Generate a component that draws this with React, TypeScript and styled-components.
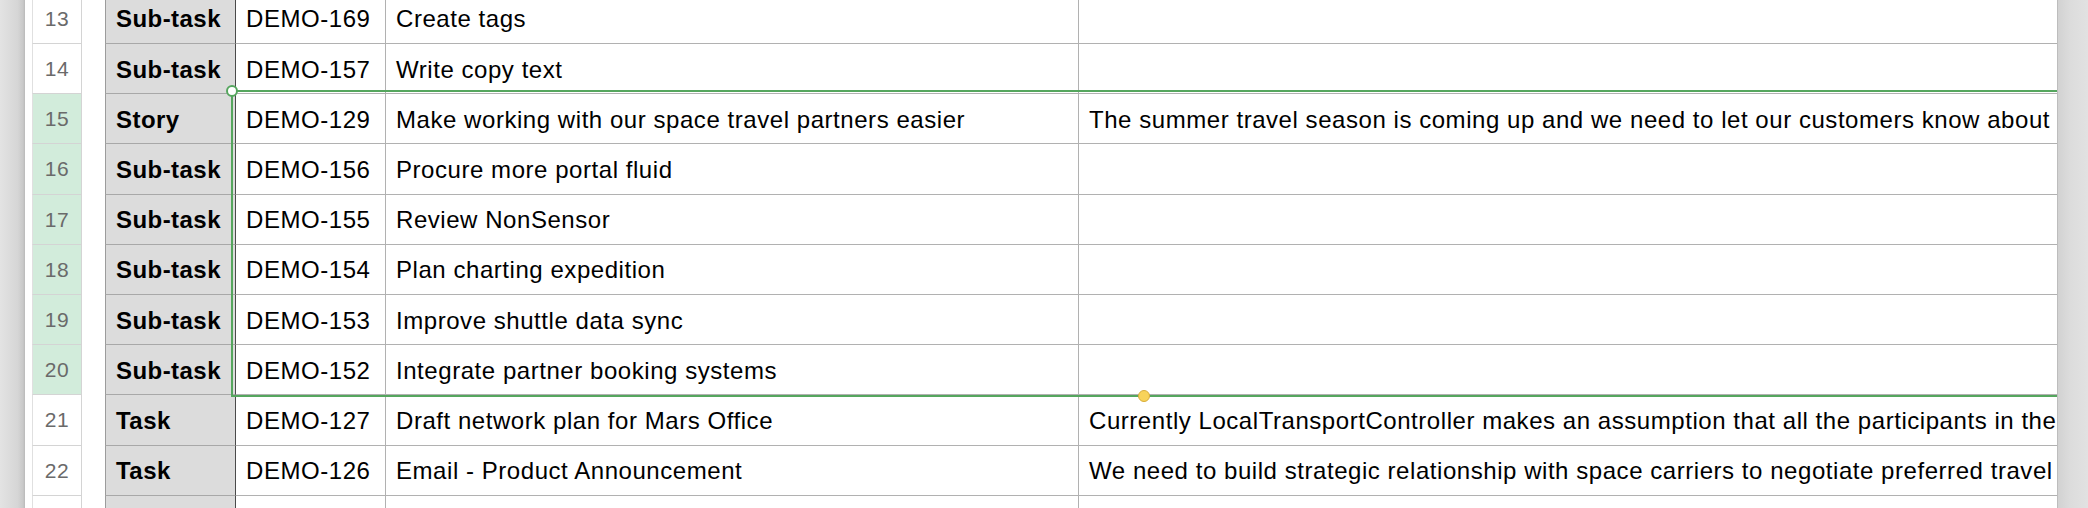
import React from "react";
import styled, { createGlobalStyle } from "styled-components";

const Global = createGlobalStyle`
  html, body { margin: 0; padding: 0; background: #ffffff; overflow: hidden; }
  body { font-family: "Liberation Sans", Arial, Helvetica, sans-serif; }
`;

const ROW_H = 50.2;

const Page = styled.div`
  display: flex;
  width: 2088px;
  height: 508px;
  overflow: hidden;
  background: #fff;
`;

const LeftShade = styled.div`
  width: 25px;
  flex: none;
  background: linear-gradient(to right, #e3e3e3 0%, #d6d6d6 70%, #c9c9c9 92%, #b9b9b9 100%);
`;

const RightShade = styled.div`
  width: 30px;
  flex: none;
  border-left: 1px solid #bdbdbd;
  background: linear-gradient(to right, #d2d2d2 0%, #dcdcdc 40%, #e2e2e2 100%);
`;

const Sheet = styled.div`
  position: relative;
  flex: 1;
  min-width: 0;
  overflow: hidden;
`;

const Rows = styled.div`
  position: relative;
  margin-top: -6.2px;
`;

const Row = styled.div`
  display: grid;
  grid-template-columns: 7px 50px 23px 131px 150px 693px 1fr;
  height: ${ROW_H}px;
`;

const Blank = styled.div``;

const NumCell = styled.div<{ $active?: boolean }>`
  box-sizing: border-box;
  border-left: 1px solid #e0e0e0;
  border-right: 1px solid #d4d4d4;
  border-bottom: 1px solid #d4d4d4;
  background: ${(p) => (p.$active ? "#d2ecdb" : "#ffffff")};
  color: #6a6a6a;
  font-size: 21px;
  letter-spacing: 0.6px;
  padding-top: 1px;
  display: flex;
  align-items: center;
  justify-content: center;
`;

const Cell = styled.div`
  box-sizing: border-box;
  border-bottom: 1px solid #b1b1b1;
  border-right: 1px solid #b1b1b1;
  display: flex;
  align-items: center;
  padding-left: 10px;
  padding-top: 2px;
  font-size: 24px;
  letter-spacing: 0.55px;
  color: #000;
  white-space: nowrap;
  overflow: hidden;
`;

const TypeCell = styled(Cell)`
  background: #dcdcdc;
  border-left: 1px solid #9c9c9c;
  border-right: 1px solid #4a4a4a;
  border-bottom-color: #a8a8a8;
  font-weight: 700;
  letter-spacing: 0.45px;
`;

const DescCell = styled(Cell)`
  border-right: none;
`;

const Selection = styled.div`
  position: absolute;
  left: 206px;
  right: -4px;
  top: ${2 * ROW_H - 4}px;
  height: ${6 * ROW_H + 6}px;
  box-sizing: border-box;
  border: 2px solid #55a65e;
  pointer-events: none;
`;

const Handle = styled.div<{ $tone: "start" | "end" }>`
  position: absolute;
  width: 12px;
  height: 12px;
  box-sizing: border-box;
  border-radius: 50%;
  ${(p) =>
    p.$tone === "start"
      ? `left: -7px; top: -7px; background: #fff; border: 2px solid #55a65e;`
      : `left: 905px; bottom: -7px; background: #f8d35a; border: 1px solid #d8ad3a;`}
`;

type RowData = {
  n: number;
  type: string;
  id: string;
  summary: string;
  desc: string;
};

const rows: RowData[] = [
  { n: 13, type: "Sub-task", id: "DEMO-169", summary: "Create tags", desc: "" },
  { n: 14, type: "Sub-task", id: "DEMO-157", summary: "Write copy text", desc: "" },
  {
    n: 15,
    type: "Story",
    id: "DEMO-129",
    summary: "Make working with our space travel partners easier",
    desc: "The summer travel season is coming up and we need to let our customers know about",
  },
  { n: 16, type: "Sub-task", id: "DEMO-156", summary: "Procure more portal fluid", desc: "" },
  { n: 17, type: "Sub-task", id: "DEMO-155", summary: "Review NonSensor", desc: "" },
  { n: 18, type: "Sub-task", id: "DEMO-154", summary: "Plan charting expedition", desc: "" },
  { n: 19, type: "Sub-task", id: "DEMO-153", summary: "Improve shuttle data sync", desc: "" },
  { n: 20, type: "Sub-task", id: "DEMO-152", summary: "Integrate partner booking systems", desc: "" },
  {
    n: 21,
    type: "Task",
    id: "DEMO-127",
    summary: "Draft network plan for Mars Office",
    desc: "Currently LocalTransportController makes an assumption that all the participants in the",
  },
  {
    n: 22,
    type: "Task",
    id: "DEMO-126",
    summary: "Email - Product Announcement",
    desc: "We need to build strategic relationship with space carriers to negotiate preferred travel",
  },
  { n: 23, type: "", id: "", summary: "", desc: "" },
];

export default function App() {
  return (
    <>
      <Global />
      <Page>
        <LeftShade />
        <Sheet>
          <Rows>
            {rows.map((r) => (
              <Row key={r.n}>
                <Blank />
                <NumCell $active={r.n >= 15 && r.n <= 20}>{r.n < 23 ? r.n : ""}</NumCell>
                <Blank />
                <TypeCell>{r.type}</TypeCell>
                <Cell>{r.id}</Cell>
                <Cell>{r.summary}</Cell>
                <DescCell>{r.desc}</DescCell>
              </Row>
            ))}
            <Selection>
              <Handle $tone="start" />
              <Handle $tone="end" />
            </Selection>
          </Rows>
        </Sheet>
        <RightShade />
      </Page>
    </>
  );
}
